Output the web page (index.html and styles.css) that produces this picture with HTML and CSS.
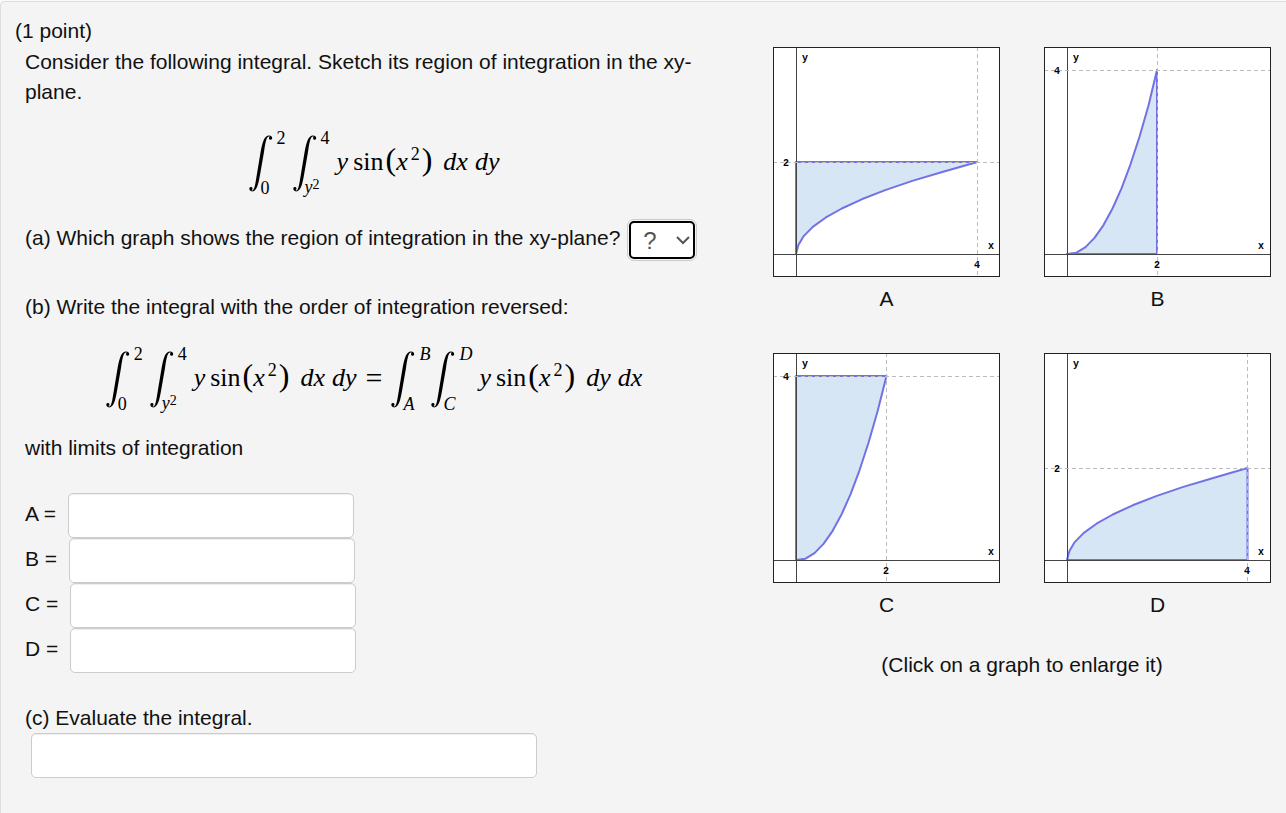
FILE: index.html
```html
<!DOCTYPE html>
<html lang="en">
<head>
    <meta charset="UTF-8">
    <meta name="viewport" content="width=device-width, initial-scale=1.0">
    <title>Order of integration</title>
    <link rel="stylesheet" href="styles.css">
</head>
<body>
    <!-- shared integral sign -->
    <svg class="defs" width="0" height="0" aria-hidden="true">
        <symbol id="integral" viewBox="0 0 24 57">
            <path d="M20 .4C15.4 .4 13.4 7 11.6 17L7.6 41C6.2 50 5.4 55.4 3.2 55.4L3.2 56.4C7.8 56.4 9.4 49 11 40L15 17C16.4 8 17.2 1.4 20 1.4Z"/>
            <path d="M20 .4C22.2 .4 23.2 1.8 23.2 3.2A1.6 1.6 0 1 1 20.9 1.8L20 1.4ZM3.2 56.4C1.2 56.4 .3 55 .3 53.6A1.6 1.6 0 1 1 2.5 55L3.2 55.4Z"/>
        </symbol>
    </svg>

    <div class="problem">
        <div class="points">(1 point)</div>
        <div class="columns">
            <form class="question">
                <p>Consider the following integral. Sketch its region of integration in the xy-plane.</p>

                <div class="math first">
                    <span class="int"><svg><use href="#integral"/></svg><span class="limits"><span>2</span><span>0</span></span></span>
                    <span class="int"><svg><use href="#integral"/></svg><span class="limits"><span>4</span><span><i>y</i><small>2</small></span></span></span>
                    <span class="body"><i>y</i><span class="fn">sin</span><span class="paren">(</span><i>x</i><sup>2</sup><span class="paren">)</span><i class="diff">dx</i><i class="diff">dy</i></span>
                </div>

                <div class="part-a">
                    <label for="graph">(a) Which graph shows the region of integration in the xy-plane?</label>
                    <span class="select">
                        <select id="graph">
                            <option>?</option>
                            <option>A</option>
                            <option>B</option>
                            <option>C</option>
                            <option>D</option>
                        </select>
                        <svg viewBox="0 0 14 9"><path d="M1 1l6 6 6-6"/></svg>
                    </span>
                </div>

                <p>(b) Write the integral with the order of integration reversed:</p>

                <div class="math second">
                    <span class="int"><svg><use href="#integral"/></svg><span class="limits"><span>2</span><span>0</span></span></span>
                    <span class="int"><svg><use href="#integral"/></svg><span class="limits"><span>4</span><span><i>y</i><small>2</small></span></span></span>
                    <span class="body"><i>y</i><span class="fn">sin</span><span class="paren">(</span><i>x</i><sup>2</sup><span class="paren">)</span><i class="diff">dx</i><i class="diff">dy</i></span>
                    <span class="eq">=</span>
                    <span class="int tight"><svg><use href="#integral"/></svg><span class="limits"><i>B</i><i>A</i></span></span>
                    <span class="int wide"><svg><use href="#integral"/></svg><span class="limits"><i>D</i><i>C</i></span></span>
                    <span class="body"><i>y</i><span class="fn">sin</span><span class="paren">(</span><i>x</i><sup>2</sup><span class="paren">)</span><i class="diff">dy</i><i class="diff">dx</i></span>
                </div>

                <p>with limits of integration</p>

                <div class="limits-form">
                    <div class="row"><label for="limit-a">A =</label><input type="text" id="limit-a"></div>
                    <div class="row"><label for="limit-b">B =</label><input type="text" id="limit-b"></div>
                    <div class="row"><label for="limit-c">C =</label><input type="text" id="limit-c"></div>
                    <div class="row"><label for="limit-d">D =</label><input type="text" id="limit-d"></div>
                </div>

                <label class="part-c" for="answer">(c) Evaluate the integral.</label>
                <input type="text" id="answer">
            </form>

            <div class="graphs">
                <figure>
                    <a href="#a"><svg class="graph" viewBox="0 0 227 230">
                        <path class="region" d="M23 207L25.3 198.3 30.7 189.1 39.8 179.9 52.5 170.7 68.8 161.5 88.7 152.3 112.2 143.1 139.3 133.9 170.1 124.7 204.5 115H23Z"/>
                        <path class="axis" d="M23.5 0V230M0 207.5H227"/>
                        <path class="guide" d="M204.5 0V230M0 115.5H227"/>
                        <text x="29" y="14">y</text><text x="215" y="202">x</text>
                        <text x="10" y="119">2</text><text x="201" y="221">4</text>
                    </svg></a>
                    <figcaption>A</figcaption>
                </figure>
                <figure>
                    <a href="#b"><svg class="graph" viewBox="0 0 227 230">
                        <path class="region" d="M23 207L32.5 205.7 41.5 200.1 50.5 190.9 59.5 178.1 68.5 161.5 77.5 141.3 86.5 117.3 95.5 89.7 104.5 58.5 113 23V207Z"/>
                        <path class="axis" d="M23.5 0V230M0 207.5H227"/>
                        <path class="guide" d="M113.5 0V230M0 23.5H227"/>
                        <text x="29" y="14">y</text><text x="214" y="202">x</text>
                        <text x="10" y="27">4</text><text x="110" y="221">2</text>
                    </svg></a>
                    <figcaption>B</figcaption>
                </figure>
                <figure>
                    <a href="#c"><svg class="graph" viewBox="0 0 227 230">
                        <path class="region" d="M23 207L32.5 205.7 41.5 200.1 50.5 190.9 59.5 178.1 68.5 161.5 77.5 141.3 86.5 117.3 95.5 89.7 104.5 58.5 113.5 23H23Z"/>
                        <path class="axis" d="M23.5 0V230M0 207.5H227"/>
                        <path class="guide" d="M113.5 0V230M0 23.5H227"/>
                        <text x="29" y="14">y</text><text x="215" y="202">x</text>
                        <text x="10" y="27">4</text><text x="110" y="221">2</text>
                    </svg></a>
                    <figcaption>C</figcaption>
                </figure>
                <figure>
                    <a href="#d"><svg class="graph" viewBox="0 0 227 230">
                        <path class="region" d="M23 207L25.3 198.3 30.7 189.1 39.8 179.9 52.5 170.7 68.8 161.5 88.7 152.3 112.2 143.1 139.3 133.9 170.1 124.7 203.5 115V207Z"/>
                        <path class="axis" d="M23.5 0V230M0 207.5H227"/>
                        <path class="guide" d="M203.5 0V230M0 115.5H227"/>
                        <text x="29" y="14">y</text><text x="214" y="202">x</text>
                        <text x="10" y="119">2</text><text x="200" y="221">4</text>
                    </svg></a>
                    <figcaption>D</figcaption>
                </figure>
                <p class="hint">(Click on a graph to enlarge it)</p>
            </div>
        </div>
    </div>
</body>
</html>
```
FILE: styles.css
```css
* {
    box-sizing: border-box;
}
body {
    margin: 0;
    background: #fafafa;
    color: #111;
    font-family: "Liberation Sans", Arial, sans-serif;
    font-size: 21px;
    line-height: 30px;
}
p, figure {
    margin: 0;
}
.defs {
    position: absolute;
}
.problem {
    min-height: calc(100vh - 1px);
    margin-top: 1px;
    padding: 14px 15px 14px 14px;
    background: #f4f4f4;
    border: 1px solid #ddd;
    border-width: 1px 0 0 1px;
    border-radius: 5px 0 0 0;
}
.columns {
    display: flex;
    gap: 50px;
    padding: 1px 0 0 10px;
}
.question {
    flex: 1;
}

/* formulas */
.math {
    display: flex;
    justify-content: center;
    align-items: center;
    height: 66px;
    font-family: "Liberation Serif", "Times New Roman", serif;
    font-size: 26px;
    color: #000;
}
.math.first {
    margin: 23px 0 22px;
}
.math.second {
    margin: 24px 0 21px;
}
.int {
    display: flex;
    align-items: center;
    width: 44px;
}
.int.tight {
    width: 40px;
}
.int.wide {
    width: 48px;
}
.int svg {
    flex: none;
    width: 24px;
    height: 57px;
}
.limits {
    display: flex;
    flex-direction: column;
    justify-content: space-between;
    height: 66px;
    margin-left: 4px;
    font-size: 18px;
    line-height: 16px;
}
.limits > :last-child {
    margin-left: -16px;
}
.limits small {
    position: relative;
    top: -4px;
    font-size: 14px;
    line-height: 1;
}
.body {
    display: flex;
    align-items: baseline;
    padding-bottom: 6px;
}
.fn {
    margin-left: 5px;
}
.paren {
    margin: 0 0 0 2px;
    font-size: 32px;
}
.body sup {
    align-self: flex-start;
    margin-left: 3px;
    font-size: 18px;
    line-height: 20px;
}
.diff {
    margin-left: 7px;
}
.paren + .diff {
    margin-left: 11px;
}
.eq {
    margin: 0 9px;
    padding-bottom: 2px;
    font-size: 30px;
}

/* answers */
.part-a {
    display: flex;
    align-items: center;
    gap: 9px;
    height: 44px;
    margin-bottom: 30px;
}
.part-a label {
    padding-bottom: 4px;
}
.select {
    position: relative;
    display: flex;
}
.select select {
    appearance: none;
    width: 66px;
    height: 38px;
    padding: 0 12px;
    border: 2px solid #000;
    border-radius: 5px;
    outline: 1px solid #ccc;
    outline-offset: 1px;
    background: #fff;
    color: #555;
    font: 24px "Liberation Sans", Arial, sans-serif;
}
.select svg {
    position: absolute;
    right: 5px;
    top: 15px;
    width: 14px;
    height: 9px;
    fill: none;
    stroke: #555;
    stroke-width: 2;
    pointer-events: none;
}
input {
    width: 286px;
    height: 45px;
    padding: 4px 8px;
    border: 1px solid #ccc;
    border-radius: 5px;
    background: #fff;
    box-shadow: inset 0 1px 1px #eee;
    font: inherit;
}
.limits-form {
    margin: 30px 0;
}
.row {
    display: flex;
    align-items: center;
    gap: 12px;
}
.row label {
    padding-bottom: 4px;
}
.part-c {
    display: block;
}
#answer {
    display: block;
    width: 506px;
    max-width: 100%;
    margin-left: 6px;
}

/* graphs */
.graphs {
    display: grid;
    grid-template-columns: 227px 227px;
    column-gap: 44px;
    align-content: start;
    text-align: center;
}
.graph {
    display: block;
    width: 227px;
    height: 230px;
    outline: 1px solid #222;
    outline-offset: -1px;
    background: #fff;
}
.graph text {
    fill: #000;
    font: bold 10px "Liberation Mono", monospace;
}
.region {
    fill: #d7e6f4;
    stroke: #7272e4;
    stroke-width: 2;
    stroke-linejoin: round;
}
.axis {
    stroke: #444;
}
.guide {
    stroke: #bbb;
    stroke-dasharray: 4 3;
}
figcaption {
    margin: 7px 0 39px;
}
.hint {
    grid-column: 1 / -1;
    margin-top: -9px;
}
```
